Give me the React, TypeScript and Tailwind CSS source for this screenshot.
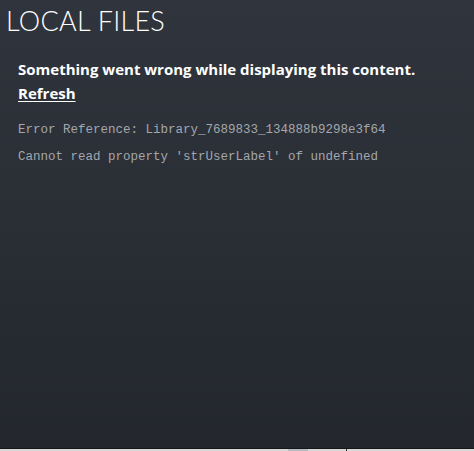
const App = () => {
  return (
    <div className="w-[474px] h-[451px] flex flex-col bg-gradient-to-b from-[#30353d] to-[#23262d] overflow-hidden">
      <div className="flex-1 flex flex-col">
        <h1 className="pl-[6px] pt-[3px] text-[27px] leading-[36px] font-light tracking-[0.01em] text-white font-['Lato','Open_Sans',sans-serif]">
          LOCAL FILES
        </h1>
        <div className="pl-[18px] pt-[18px] font-['Open_Sans','Lato',sans-serif] text-white font-bold text-[15px] leading-[24px]">
          <div>Something went wrong while displaying this content.</div>
          <div className="underline underline-offset-2">Refresh</div>
        </div>
        <div className="pl-[18px] pt-[17px] flex flex-col gap-[11px] font-['Courier_New','Liberation_Mono',monospace] text-[12.5px] leading-[16px] text-[#a3a7ac]">
          <div>Error Reference: Library_7689833_134888b9298e3f64</div>
          <div>Cannot read property 'strUserLabel' of undefined</div>
        </div>
      </div>
      <div className="h-[1px] bg-[#15171b]" />
      <div className="h-[2px] flex bg-[#d8d8d8]">
        <div className="w-[288px]" />
        <div className="w-[20px] bg-[#b8bcc0]" />
        <div className="w-[38px]" />
        <div className="w-[1px] bg-[#333]" />
      </div>
    </div>
  );
};

export default App;
